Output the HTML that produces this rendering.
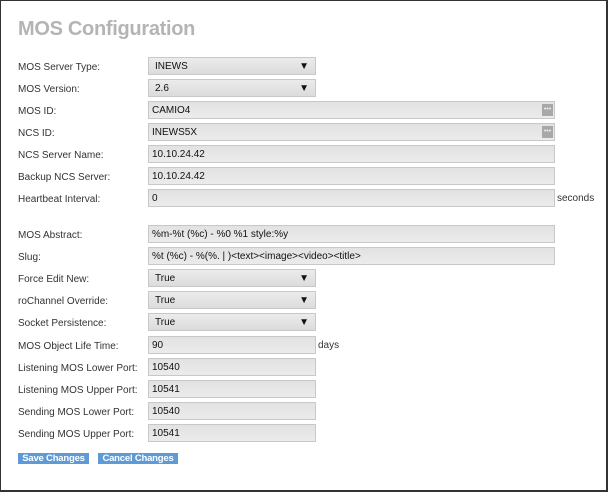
<!DOCTYPE html>
<html><head><style>
body{margin:0;width:609px;height:493px;background:#fff;font-family:"Liberation Sans",sans-serif;position:relative;overflow:hidden}
.frame{position:absolute;left:0;top:0;width:605px;height:489px;border:2px solid #333;border-width:1px 2px 2px 1px}
h1{position:absolute;left:18px;top:18px;margin:0;font-size:20px;font-weight:bold;color:#b4b4b4;letter-spacing:-0.3px}
.l{position:absolute;left:18px;font-size:10px;color:#333;margin-top:2px}
.f{position:absolute;left:148px;height:16px;border:1px solid #c8c8c8;background:linear-gradient(#e2e2e2,#ebebeb);font-size:10px;line-height:17px;padding-left:3px;color:#111;box-sizing:content-box}
.s{width:163px}.w{width:402px}
.s.sel{background:linear-gradient(#ececec,#dcdcdc)}
.arr{position:absolute;right:6px;top:0;font-size:10px}
.dots{position:absolute;right:1px;top:2px;width:11px;height:12px;background:#a8a8a8;color:#eee;font-size:7px;line-height:12px;text-align:center}
.u{position:absolute;font-size:10px;color:#333}
.b{position:absolute;top:453px;height:11px;background:#5e9bd6;color:#fff;font-size:9.5px;font-weight:bold;line-height:11px;text-align:center;white-space:nowrap;letter-spacing:-0.2px}
</style></head><body>
<div class="frame"></div>
<h1>MOS Configuration</h1>

<div class="l" style="top:60px">MOS Server Type:</div><div class="f s sel" style="top:57px;padding-left:6px;width:160px">INEWS<span class="arr">▼</span></div>
<div class="l" style="top:82px">MOS Version:</div><div class="f s sel" style="top:79px;padding-left:6px;width:160px">2.6<span class="arr">▼</span></div>
<div class="l" style="top:104px">MOS ID:</div><div class="f w" style="top:101px">CAMIO4<span class="dots">•••</span></div>
<div class="l" style="top:126px">NCS ID:</div><div class="f w" style="top:123px">INEWS5X<span class="dots">•••</span></div>
<div class="l" style="top:148px">NCS Server Name:</div><div class="f w" style="top:145px">10.10.24.42</div>
<div class="l" style="top:170px">Backup NCS Server:</div><div class="f w" style="top:167px">10.10.24.42</div>
<div class="l" style="top:192px">Heartbeat Interval:</div><div class="f w" style="top:189px">0</div><div class="u" style="left:557px;top:193px">seconds</div>

<div class="l" style="top:228px">MOS Abstract:</div><div class="f w" style="top:225px">%m-%t (%c) - %0 %1 style:%y</div>
<div class="l" style="top:250px">Slug:</div><div class="f w" style="top:247px">%t (%c) - %(%. | )&lt;text&gt;&lt;image&gt;&lt;video&gt;&lt;title&gt;</div>
<div class="l" style="top:272px">Force Edit New:</div><div class="f s sel" style="top:269px;padding-left:6px;width:160px">True<span class="arr">▼</span></div>
<div class="l" style="top:294px">roChannel Override:</div><div class="f s sel" style="top:291px;padding-left:6px;width:160px">True<span class="arr">▼</span></div>
<div class="l" style="top:316px">Socket Persistence:</div><div class="f s sel" style="top:313px;padding-left:6px;width:160px">True<span class="arr">▼</span></div>
<div class="l" style="top:339px">MOS Object Life Time:</div><div class="f s" style="top:336px">90</div><div class="u" style="left:318px;top:340px">days</div>
<div class="l" style="top:361px">Listening MOS Lower Port:</div><div class="f s" style="top:358px">10540</div>
<div class="l" style="top:383px">Listening MOS Upper Port:</div><div class="f s" style="top:380px">10541</div>
<div class="l" style="top:405px">Sending MOS Lower Port:</div><div class="f s" style="top:402px">10540</div>
<div class="l" style="top:427px">Sending MOS Upper Port:</div><div class="f s" style="top:424px">10541</div>

<div class="b" style="left:18px;width:71px">Save Changes</div>
<div class="b" style="left:98px;width:80px">Cancel Changes</div>
</body></html>
